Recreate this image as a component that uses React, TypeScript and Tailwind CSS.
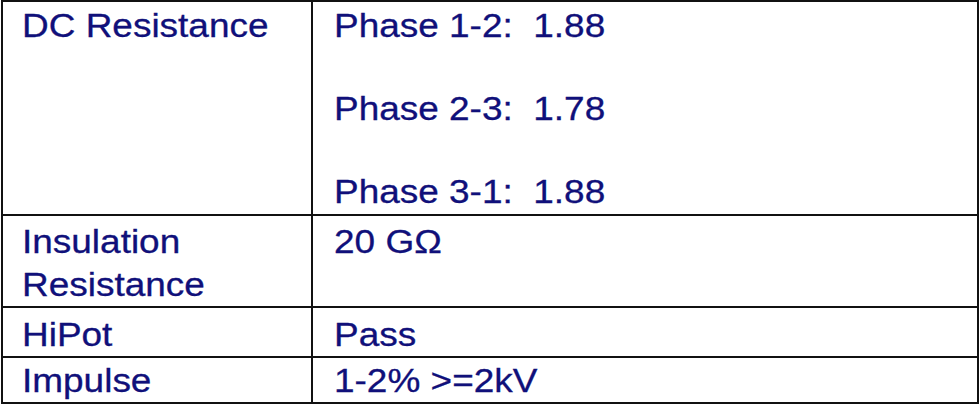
const ink = "inline-block origin-left scale-x-[1.12] whitespace-pre"

function Row({ label, children, className, pad }: { label: React.ReactNode; children: React.ReactNode; className: string; pad: string }) {
    return (
        <div className={`flex ${className}`}>
            <div className={`w-[310px] shrink-0 border-r-2 border-[#111] pl-[19px] ${pad}`}>{label}</div>
            <div className={`flex-1 pl-[21px] ${pad}`}>{children}</div>
        </div>
    )
}

export default function App() {
    return (
        <main className="w-[980px] h-[405px] bg-white overflow-hidden font-['Liberation_Sans',Arial,sans-serif] text-[33px] leading-[41px] text-[#10107a] [-webkit-text-stroke:0.3px_#10107a]">
            <div className="ml-[1px] w-[978px] border-2 border-[#111]">
                <Row className="h-[214px] border-b-2 border-[#111]" pad="pt-[3px]" label={<span className={ink}>DC Resistance</span>}>
                    <div className="flex flex-col gap-[42px]">
                        <span className={ink}>Phase 1-2:  1.88</span>
                        <span className={ink}>Phase 2-3:  1.78</span>
                        <span className={ink}>Phase 3-1:  1.88</span>
                    </div>
                </Row>
                <Row
                    className="h-[92px] border-b-2 border-[#111] leading-[43px]"
                    pad="pt-[4px]"
                    label={
                        <div className="flex flex-col">
                            <span className={ink}>Insulation</span>
                            <span className={ink}>Resistance</span>
                        </div>
                    }
                >
                    <span className={ink}>20 GΩ</span>
                </Row>
                <Row className="h-[50px] border-b-2 border-[#111]" pad="pt-[6px]" label={<span className={ink}>HiPot</span>}>
                    <span className={ink}>Pass</span>
                </Row>
                <Row className="h-[44px]" pad="pt-[2px]" label={<span className={ink}>Impulse</span>}>
                    <span className={ink}>1-2% &gt;=2kV</span>
                </Row>
            </div>
        </main>
    )
}
